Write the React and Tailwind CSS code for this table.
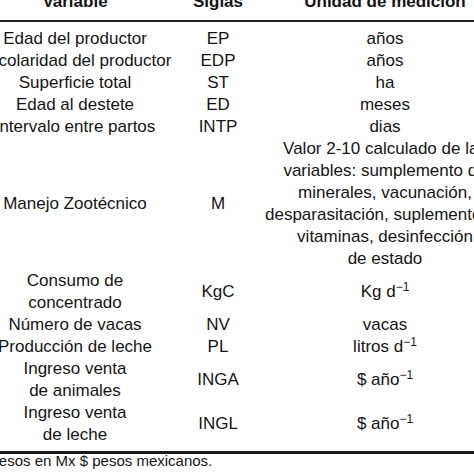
import React from 'react';

const rows = [
  { v: ['Edad del productor'], s: 'EP', u: ['años'] },
  { v: ['Escolaridad del productor'], s: 'EDP', u: ['años'] },
  { v: ['Superficie total'], s: 'ST', u: ['ha'] },
  { v: ['Edad al destete'], s: 'ED', u: ['meses'] },
  { v: ['Intervalo entre partos'], s: 'INTP', u: ['dias'] },
  {
    v: ['Manejo Zootécnico'],
    s: 'M',
    u: [
      'Valor 2-10 calculado de las',
      'variables: sumplemento de',
      'minerales, vacunación,',
      'desparasitación, suplemento de',
      'vitaminas, desinfección',
      'de estado',
    ],
  },
  { v: ['Consumo de', 'concentrado'], s: 'KgC', u: [<>Kg d<sup className="text-[12px]">−1</sup></>] },
  { v: ['Número de vacas'], s: 'NV', u: ['vacas'] },
  { v: ['Producción de leche'], s: 'PL', u: [<>litros d<sup className="text-[12px]">−1</sup></>] },
  { v: ['Ingreso venta', 'de animales'], s: 'INGA', u: [<>$ año<sup className="text-[12px]">−1</sup></>] },
  { v: ['Ingreso venta', 'de leche'], s: 'INGL', u: [<>$ año<sup className="text-[12px]">−1</sup></>] },
];

function Lines({ items }) {
  return (
    <div className="flex flex-col items-center">
      {items.map((t, i) => (
        <div key={i} className="whitespace-nowrap">{t}</div>
      ))}
    </div>
  );
}

export default function App() {
  return (
    <div className="h-[474px] w-[474px] overflow-hidden bg-white text-[#141414] font-['Liberation_Sans',Arial,sans-serif]">
      <div className="-ml-[40px] -mt-[9px] w-[564px] text-[17px] leading-[22px]">
        <div className="grid grid-cols-[230px_56px_278px] font-bold">
          <div className="text-center">Variable</div>
          <div className="text-center">Siglas</div>
          <div className="text-center">Unidad de medición</div>
        </div>
        <div className="mt-[7px] h-[1.5px] bg-[#222]" />
        <div className="mt-[6.5px] grid grid-cols-[230px_56px_278px]">
          {rows.map((r, i) => (
            <React.Fragment key={i}>
              <div className="flex items-center justify-center text-center">
                <Lines items={r.v} />
              </div>
              <div className="flex items-center justify-center">{r.s}</div>
              <div className="flex items-center justify-center text-center">
                <Lines items={r.u} />
              </div>
            </React.Fragment>
          ))}
        </div>
        <div className="mt-[5px] h-[2.5px] bg-[#1a1a1a]" />
        <div className="ml-[13px] -mt-[1px] text-[15px] leading-[15px] whitespace-nowrap">
          Ingresos en Mx $ pesos mexicanos.
        </div>
      </div>
    </div>
  );
}
